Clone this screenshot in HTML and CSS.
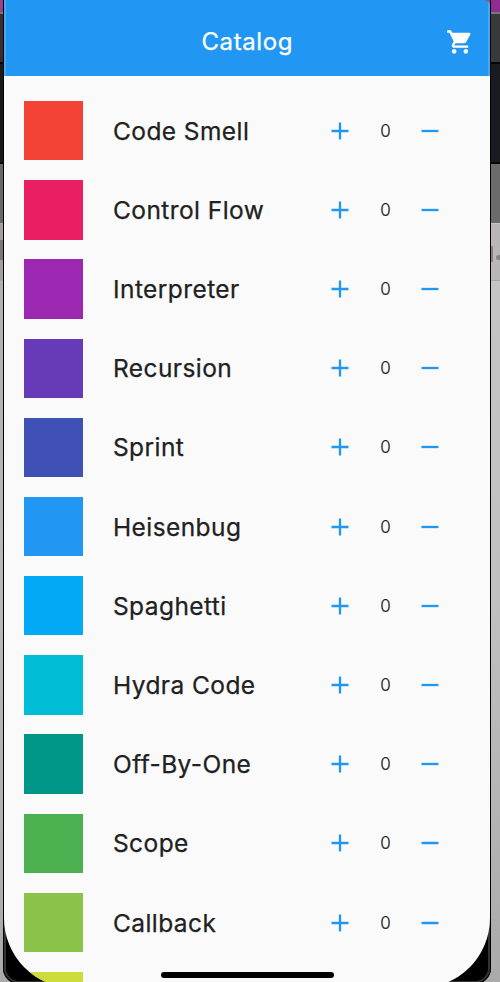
FILE: index.html
```
<!DOCTYPE html>
<html lang="en">
<head>
<meta charset="utf-8">
<title>Catalog</title>
<link rel="stylesheet" href="styles.css">
</head>
<body>
<svg class="symbols" aria-hidden="true">
  <symbol id="plus" viewBox="0 0 18 18"><path d="M9 .5v17M.5 9h17"/></symbol>
  <symbol id="minus" viewBox="0 0 18 18"><path d="M.5 9h17"/></symbol>
</svg>
<div class="desktop">
  <div class="phone">
    <div class="screen">
      <header class="bar">
        <h1>Catalog</h1>
        <svg class="cart" viewBox="0 0 24 24"><path d="M7 18c-1.1 0-1.99.9-1.99 2S5.900 22 7 22s2-.9 2-2-.9-2-2-2zM1 2v2h2l3.600 7.590-1.350 2.450c-.16.28-.25.61-.25.96 0 1.100.9 2 2 2h12v-2H7.420c-.14 0-.25-.11-.25-.25l.03-.12.9-1.630h7.450c.75 0 1.410-.41 1.750-1.030l3.580-6.490A1 1 0 0 0 20 4H5.210l-.94-2H1zm16 16c-1.100 0-1.990.9-1.990 2s.89 2 1.990 2 2-.9 2-2-.9-2-2-2z"/></svg>
      </header>
      <main class="list"></main>
    </div>
  </div>
  <div class="ribbon"></div>
  <div class="glyph"></div>
  <div class="home"></div>
</div>
<script src="catalog.js"></script>
</body>
</html>
```
FILE: styles.css
```
* { box-sizing: border-box; }
body { margin: 0; width: 500px; height: 982px; overflow: hidden; font-family: Inter, "Liberation Sans", sans-serif; }
.symbols { display: none; }
.desktop {
  position: relative;
  height: 982px;
  overflow: hidden;
  padding: 0 9px 0 3px;
  background:
    linear-gradient(#99408a 0 12px, #777 12px 14px, #303032 14px 62px, #050505 62px 64px, #17191b 64px 162px, #050505 162px 164px, #696867 164px 223px, #aaa6a6 223px 224px, #a39d9f 224px 240px, #7c7577 240px 260px, #a39d9f 260px 280px, #b1b0b0 281px, #b8b8b8 600px, #aaa 982px) 0 0 / 4px 100% no-repeat,
    linear-gradient(#8f2b91 0 12px, #777 12px 14px, #39393b 14px 62px, #050505 62px 64px, #181c20 64px 162px, #050505 162px 164px, #6b6b6b 164px 223px, #c8c5c7 223px 224px, #b9b6b8 224px 280px, #a5a5a5 280px 281px, #c4c4c4 281px, #c0c0c0 600px, #aaa 982px);
}
.phone {
  height: 984px;
  padding: 0 1px;
  background: #000;
  border-radius: 0 0 16px 16px;
  box-shadow: inset 0 0 0 1px #000, inset 0 0 0 3px #333;
}
.screen {
  height: 988px;
  overflow: hidden;
  background: #fafafa;
  border-radius: 0 0 70px 70px;
}
.bar {
  display: flex;
  align-items: center;
  justify-content: center;
  height: 76.400px;
  padding-top: 7px;
  background: #2196f3;
  color: #fff;
  border-left: 2px solid #47a8f5;
  border-right: 2px solid #47a8f5;
}
h1 { flex: 1; margin: 0 0 0 42.500px; font-size: 24px; font-weight: 400; letter-spacing: .6px; text-align: center; -webkit-text-stroke: .25px; }
.cart { width: 28px; height: 28px; margin-right: 14px; fill: currentColor; }
.list { padding: 14.700px 50.600px 0 19.600px; }
.row { display: flex; align-items: center; height: 79.200px; }
.swatch { flex: none; width: 59.400px; height: 59.400px; }
.name { flex: 1; margin-left: 30px; font-size: 24.500px; font-weight: 400; letter-spacing: .42px; color: #212121; white-space: nowrap; -webkit-text-stroke: .25px; }
.icon { width: 18px; height: 18px; fill: none; stroke: #2196f3; stroke-width: 2.300; }
.count { width: 72px; text-align: center; font-size: 17px; font-weight: 300; color: #222; -webkit-text-stroke: .2px; }
.ribbon { position: absolute; left: 485px; top: 0; width: 5px; height: 3px; background: #a85068; clip-path: polygon(0 0, 100% 0, 100% 100%); }
.glyph { position: absolute; left: 491px; top: 246px; width: 2px; height: 16px; background: #858184; border-radius: 0 1px 1px 0; }
.glyph::after { content: ""; position: absolute; left: 5px; top: 9px; width: 5px; height: 5px; border-radius: 50%; background: #858184; }
.home { position: absolute; left: 160.500px; top: 971.500px; width: 173.500px; height: 6.800px; border-radius: 4px; background: #000; }
```
FILE: catalog.js
```
const items = [
  ["Code Smell", "#f44336"],
  ["Control Flow", "#e91e63"],
  ["Interpreter", "#9c27b0"],
  ["Recursion", "#673ab7"],
  ["Sprint", "#3f51b5"],
  ["Heisenbug", "#2196f3"],
  ["Spaghetti", "#03a9f4"],
  ["Hydra Code", "#00bcd4"],
  ["Off-By-One", "#009688"],
  ["Scope", "#4caf50"],
  ["Callback", "#8bc34a"],
  ["", "#cddc39"]
];
document.querySelector(".list").innerHTML = items.map(([name, color]) => `
  <div class="row">
    <div class="swatch" style="background:${color}"></div>
    ${name ? `<span class="name">${name}</span>
    <svg class="icon"><use href="#plus"/></svg>
    <span class="count">0</span>
    <svg class="icon"><use href="#minus"/></svg>` : ""}
  </div>`).join("");
```
